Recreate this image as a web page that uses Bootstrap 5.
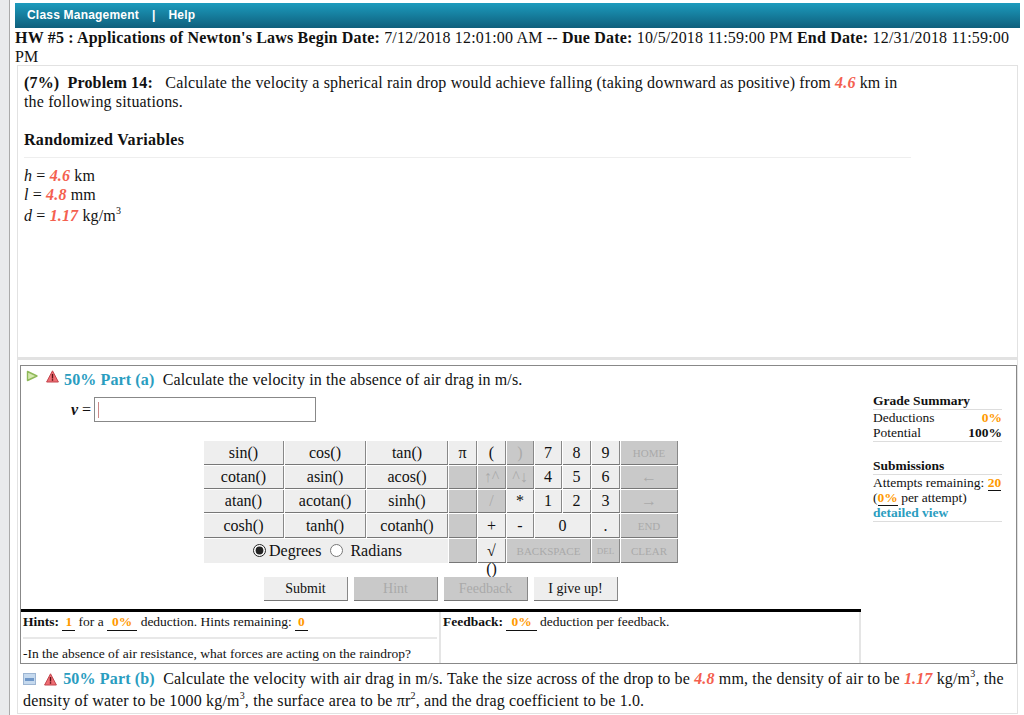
<!DOCTYPE html>
<html lang="en"><head><meta charset="utf-8"><title>HW #5</title>
<link href="https://cdn.jsdelivr.net/npm/bootstrap@5.3.0/dist/css/bootstrap.min.css" rel="stylesheet">
<style>
html,body{height:715px;overflow:hidden}
body{background:#fff;font-family:"Liberation Serif",serif;font-size:16px;line-height:19px;color:#111}
.side-rail{width:10px;height:715px;background:#e9eaec;border-right:1px solid #aaa;flex:none}
.page-area{width:1014px;flex:none}
.top-bar{height:25px;margin:3px 0 0 5px;width:1005px;background:linear-gradient(#1c9bbd,#0f5f7c);font:bold 12px/25px "Liberation Sans",sans-serif;letter-spacing:.2px;padding-left:12px}
.top-bar a{color:#fff;text-decoration:none}
.top-bar span{color:#fff;margin:0 13px}
.hw-title{margin:0 0 0 5px;height:37px;width:1000px;letter-spacing:.18px}
.prob-box{margin-left:7px;width:1001px;height:294px;border:1px solid #e2e2e2;border-bottom-width:2px;padding:7px 6px 0}
.prob-text{width:887px;letter-spacing:.15px}
.prob-box hr{margin:8px 0 8px;width:887px;border-top:1px solid #bbb}
.var-val{color:#f4604f;font-weight:bold;font-style:italic}
.rand-head{margin:19px 0 0;letter-spacing:.3px}
.var-list{letter-spacing:.15px}
.var-last{display:block;margin-top:2px}
.lower-box{margin-left:7px;width:1001px;height:355px;border:1px solid #e2e2e2;padding:5px 0 0 2px}
.part-box{width:997px;height:299px;border:1px solid #888}
.left-col{width:840px;flex:none}
.part-head{height:26px;padding:4px 0 0 5px;column-gap:8px}
.part-title{margin-left:-3px;letter-spacing:.13px}
.part-pct{color:#2a9dbf;font-weight:bold}
.part-icon{display:block;flex:none}
.ans-row{height:25px;margin-top:5px;padding-left:50px}
.ans-input{width:222px;height:25px;border:1px solid #888;margin-left:3px;background:#fff}
.ans-caret{display:block;width:1px;height:16px;margin:4px 0 0 3px;background:#c88}
.calc-grid{display:grid;width:474px;margin:19px auto 0;gap:1px;grid-template-columns:80px 81px 81px 28px 28px 27px 27px 28px 28px 57px;grid-template-rows:24px 23px 23px 24px 24px}
.calc-key{background:#eee;border:0;border-right:1px solid #888;border-bottom:1px solid #777;padding:0;color:#111;font:16px/22px "Liberation Serif",serif;text-align:center;overflow:visible}
.calc-key.off{background:#c9c9c9;color:#aaa}
.calc-key.tiny{font-size:11px}
.calc-key.micro{font-size:9px}
.calc-root{line-height:18px;padding-top:3px;display:flex;flex-direction:column;align-items:center}
.span-2{grid-column:span 2}.span-3{grid-column:span 3}
.mode-row{background:#eee;grid-column:span 3;padding:2px 0 0 49px}
.mode-row input{accent-color:#222;margin:0 3px 0 0;vertical-align:-1px}
.mode-row input.mode-second{margin-left:5px;margin-right:7px}
.action-row{margin-top:14px;column-gap:6px}
.action-btn{width:84px;height:24px;background:#eee;border:0;border-right:1px solid #888;border-bottom:1px solid #777;font:14px/22px "Liberation Serif",serif;color:#111;padding:0}
.action-btn.off{background:#c9c9c9;color:#aaa}
.hint-row{margin-top:8px;height:54px;border-top:3px solid #000;font-size:13.5px;line-height:15px}
.hint-cell{width:420px;border-right:2px solid #e5e5e5;padding:2px 2px 0}
.fb-cell{flex:1;border-right:2px solid #e5e5e5;padding:2px 2px 0}
.hint-num{display:inline-block;color:#f90;font-weight:bold;border-bottom:1px solid #111;padding:0 5px 1px}
.hint-num.short-num{padding:0 3px 1px}
.hint-rule{margin:6px 0 7px;border-top:2px solid #e8e8e8;opacity:1}
.grade-col{width:129px;margin:29px 0 0 12px;font-size:13.5px;line-height:15px}
.grade-col h6{font:bold 13.5px/12px "Liberation Serif",serif;margin:0;padding-bottom:2px;border-bottom:1px solid #ddd}
.grade-list{border-bottom:1px solid #ddd;padding-bottom:1px;margin-bottom:18px}
.or-val{color:#f90;font-weight:bold}
.tally{color:#f90;font-weight:bold;border-bottom:1px solid #111}
.teal-link{color:#2a9dbf;font-weight:bold;text-decoration:none}
.part-b{padding:4px 0 0 3px;line-height:22px;letter-spacing:.16px}
.part-b .part-head-icons{display:inline-flex;gap:8px;vertical-align:-1px;margin-right:2px}
sup{font-size:10px;top:-.7em}
</style></head><body>
<div class="d-flex">
<div class="side-rail"></div>
<div class="page-area">
  <nav class="top-bar"><a href="#">Class Management</a><span>|</span><a href="#">Help</a></nav>
  <div class="hw-title"><b>HW #5 : Applications of Newton's Laws Begin Date:</b> 7/12/2018 12:01:00 AM -- <b>Due Date:</b> 10/5/2018 11:59:00 PM <b>End Date:</b> 12/31/2018 11:59:00 PM</div>
  <div class="prob-box">
    <div class="prob-text"><b>(7%)&nbsp; Problem 14:</b> &nbsp; Calculate the velocity a spherical rain drop would achieve falling (taking downward as positive) from <span class="var-val">4.6</span> km in the following situations.</div>
    <p class="rand-head"><b>Randomized Variables</b></p>
    <hr>
    <div class="var-list"><i>h</i> = <span class="var-val">4.6</span> km<br><i>l</i> = <span class="var-val">4.8</span> mm<span class="var-last"><i>d</i> = <span class="var-val">1.17</span> kg/m<sup>3</sup></span></div>
  </div>
  <div class="lower-box">
    <div class="part-box d-flex">
      <div class="left-col">
        <div class="part-head d-flex align-items-start">
          <svg class="part-icon" width="12" height="12" viewBox="0 0 12 12"><path d="M1.5 1.5 11 6 1.5 10.5Z" fill="#d6eab0" stroke="#8fb95a" stroke-width="1.4" stroke-linejoin="round"/></svg>
          <svg class="part-icon" width="13" height="13" viewBox="0 0 13 13"><path d="M6.5 .8 12.4 12H.6Z" fill="#ee6d73" stroke="#c2444c" stroke-linejoin="round"/><rect x="5.8" y="4" width="1.4" height="4.5" fill="#5a1015"/><rect x="5.8" y="9.2" width="1.4" height="1.5" fill="#5a1015"/></svg>
          <div class="text-nowrap part-title"><span class="part-pct">50% Part (a)</span>&nbsp; Calculate the velocity in the absence of air drag in m/s.</div>
        </div>
        <div class="ans-row d-flex align-items-center"><span><b><i>v</i></b> =</span><div class="ans-input"><span class="ans-caret"></span></div></div>
        <div class="calc-grid">
          <button class="calc-key">sin()</button><button class="calc-key">cos()</button><button class="calc-key">tan()</button><button class="calc-key">π</button><button class="calc-key">(</button><button class="calc-key off">)</button><button class="calc-key">7</button><button class="calc-key">8</button><button class="calc-key">9</button><button class="calc-key off tiny">HOME</button>
          <button class="calc-key">cotan()</button><button class="calc-key">asin()</button><button class="calc-key">acos()</button><button class="calc-key off"></button><button class="calc-key off">↑^</button><button class="calc-key off">^↓</button><button class="calc-key">4</button><button class="calc-key">5</button><button class="calc-key">6</button><button class="calc-key off">←</button>
          <button class="calc-key">atan()</button><button class="calc-key">acotan()</button><button class="calc-key">sinh()</button><button class="calc-key off"></button><button class="calc-key off">/</button><button class="calc-key">*</button><button class="calc-key">1</button><button class="calc-key">2</button><button class="calc-key">3</button><button class="calc-key off">→</button>
          <button class="calc-key">cosh()</button><button class="calc-key">tanh()</button><button class="calc-key">cotanh()</button><button class="calc-key off"></button><button class="calc-key">+</button><button class="calc-key">-</button><button class="calc-key span-2">0</button><button class="calc-key">.</button><button class="calc-key off tiny">END</button>
          <div class="mode-row"><input type="radio" name="angle" checked>Degrees <input class="mode-second" type="radio" name="angle">Radians</div><button class="calc-key off"></button><div class="calc-key calc-root"><span>√</span><span>()</span></div><button class="calc-key off tiny span-3">BACKSPACE</button><button class="calc-key off micro">DEL</button><button class="calc-key off tiny">CLEAR</button>
        </div>
        <div class="action-row d-flex justify-content-center"><button class="action-btn">Submit</button><button class="action-btn off">Hint</button><button class="action-btn off">Feedback</button><button class="action-btn">I give up!</button></div>
        <div class="hint-row d-flex">
          <div class="hint-cell"><b>Hints:</b> <span class="hint-num short-num">1</span> for a <span class="hint-num">0%</span> deduction. Hints remaining: <span class="hint-num short-num">0</span><hr class="hint-rule">-In the absence of air resistance, what forces are acting on the raindrop?</div>
          <div class="fb-cell"><b>Feedback:</b> <span class="hint-num">0%</span> deduction per feedback.</div>
        </div>
      </div>
      <div class="grade-col">
        <h6>Grade Summary</h6>
        <div class="grade-list">
          <div class="d-flex justify-content-between"><span>Deductions</span><span class="or-val">0%</span></div>
          <div class="d-flex justify-content-between"><span>Potential</span><b>100%</b></div>
        </div>
        <h6>Submissions</h6>
        <div class="grade-list">Attempts remaining: <span class="tally">20</span><br>(<span class="tally">0%</span> per attempt)<br><a class="teal-link" href="#">detailed view</a></div>
      </div>
    </div>
    <div class="part-b">
      <span class="part-head-icons">
        <svg class="part-icon" width="13" height="12" viewBox="0 0 13 12"><rect x=".5" y=".5" width="12" height="11" fill="#c5d9ee" stroke="#9db5d2"/><rect x="2" y="5" width="9" height="3" fill="#6f97c8"/></svg>
        <svg class="part-icon" width="13" height="13" viewBox="0 0 13 13"><path d="M6.5 .8 12.4 12H.6Z" fill="#ee6d73" stroke="#c2444c" stroke-linejoin="round"/><rect x="5.8" y="4" width="1.4" height="4.5" fill="#5a1015"/><rect x="5.8" y="9.2" width="1.4" height="1.5" fill="#5a1015"/></svg>
      </span>
      <span class="part-pct">50% Part (b)</span>&nbsp; Calculate the velocity with air drag in m/s. Take the size across of the drop to be <span class="var-val">4.8</span> mm, the density of air to be <span class="var-val">1.17</span> kg/m<sup>3</sup>, the density of water to be 1000 kg/m<sup>3</sup>, the surface area to be πr<sup>2</sup>, and the drag coefficient to be 1.0.
    </div>
  </div>
</div>
</div>
<script src="https://cdn.jsdelivr.net/npm/bootstrap@5.3.0/dist/js/bootstrap.bundle.min.js"></script>
</body></html>
